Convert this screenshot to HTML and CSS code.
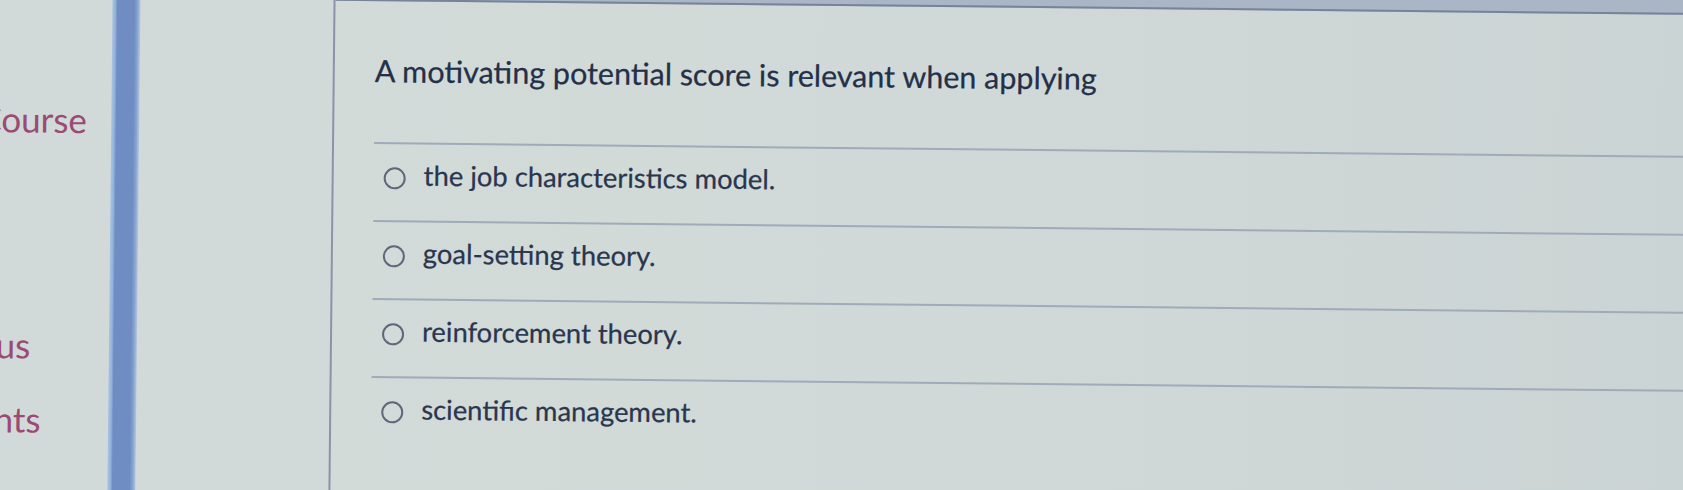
FILE: index.html
```html
<!DOCTYPE html>
<html lang="en">
<head>
<meta charset="utf-8">
<title>Quiz question</title>
<link rel="stylesheet" href="styles.css">
</head>
<body>
<div class="stage">
  <nav class="nav">
    <div class="nav-item nav-course">Course</div>
    <div class="nav-item nav-syllabus">Syllabus</div>
    <div class="nav-item nav-assign">Assignments</div>
  </nav>
  <div class="bar"></div>
  <div class="gutter"></div>
  <main class="main">
    <div class="topstrip"></div>
    <div class="content">
      <p class="question">A motivating potential score is relevant when applying</p>
      <ul class="answers">
        <li class="answer"><span class="radio"></span><span class="label">the job characteristics model.</span></li>
        <li class="answer"><span class="radio"></span><span class="label">goal-setting theory.</span></li>
        <li class="answer"><span class="radio"></span><span class="label">reinforcement theory.</span></li>
        <li class="answer"><span class="radio"></span><span class="label">scientific management.</span></li>
      </ul>
    </div>
  </main>
</div>
</body>
</html>
```
FILE: styles.css
```css
html, body {
  margin: 0;
  padding: 0;
  width: 1683px;
  height: 490px;
  overflow: hidden;
  background: #cfd8d6;
}

.stage {
  display: flex;
  width: 1723px;
  height: 530px;
  margin: -20px;
  transform: rotate(0.6deg);
  transform-origin: 861px 265px;
  background: #d1dad8;
  font-family: Lato, "Noto Sans", sans-serif;
}

.nav {
  flex: none;
  width: 130px;
  box-sizing: border-box;
  padding: 127px 0 0 20px;
  color: #9b4a74;
  font-size: 35px;
  line-height: 40px;
  white-space: nowrap;
}

.nav-item { height: 40px; }
.nav-course { margin-left: -23px; margin-bottom: 186px; }
.nav-syllabus { margin-left: -93px; margin-bottom: 34px; }
.nav-assign { margin-left: -152px; }

.bar {
  flex: none;
  width: 28px;
  background: linear-gradient(to right,
    #a9c3e2 0, #93b1dc 3px, #6f8dc2 5px, #6f8dc2 22px, #86a3d0 25px, #b3c7df 28px);
}

.gutter {
  flex: none;
  width: 193px;
}

.main {
  flex: 1;
  border-left: 2px solid #8d92ab;
  display: flex;
  flex-direction: column;
  background: linear-gradient(to right, #d2dbd8 0, #d0d9d7 50%, #cbd4d4 100%);
}

.topstrip {
  flex: none;
  height: 24px;
  background: #aab6c5;
  border-bottom: 2px solid #76849b;
}

.content {
  padding: 51px 0 0 40px;
}

.question {
  margin: 0;
  padding-bottom: 54px;
  font-size: 30.5px;
  line-height: 36px;
  color: #243049;
  -webkit-text-stroke: 0.25px #243049;
}

.answers {
  list-style: none;
  margin: 0;
  padding: 0;
}

.answer {
  border-top: 2px solid #9fabba;
  padding: 15px 0 29px 0;
  font-size: 27.4px;
  line-height: 32px;
  color: #2a364e;
  -webkit-text-stroke: 0.25px #2a364e;
  white-space: nowrap;
}

.radio {
  display: inline-block;
  width: 18px;
  height: 18px;
  border: 2px solid #5f687a;
  border-radius: 50%;
  vertical-align: middle;
  margin: 0 18px 0 10px;
}
```
